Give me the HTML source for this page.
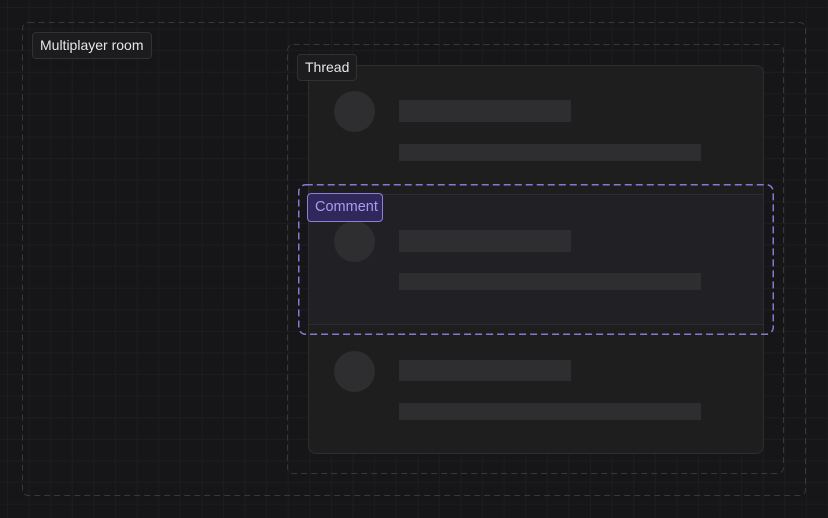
<!DOCTYPE html><html><head><style>
body{margin:0;width:828px;height:518px;overflow:hidden;background-color:#161618;background-image:linear-gradient(#1d1d20 1px,transparent 1px),linear-gradient(90deg,#1d1d20 1px,transparent 1px);background-size:21.6px 21.6px;background-position:7px 7px;font-family:"Liberation Sans",sans-serif;position:relative}
div{position:absolute;box-sizing:border-box}
svg{position:absolute;left:0;top:0}
.lbl{background:#1c1c1e;border:1px solid #313134;border-radius:4px;color:#e6e6e6;font-size:14px;line-height:25px;padding:0 7px}
.av{width:41px;height:41px;border-radius:50%;background:#2e2e31}
.b{background:#2e2e31}
</style></head><body>
<svg width="828" height="518" style="z-index:0">
<rect x="22.5" y="22.5" width="783" height="473" rx="6" fill="none" stroke="#38383b" stroke-dasharray="6 4"/>
<rect x="287.5" y="44.5" width="496" height="429" rx="6" fill="none" stroke="#38383b" stroke-dasharray="6 4"/>
</svg>
<div class="lbl" style="left:32px;top:32px;width:120px;height:27px">Multiplayer room</div>
<div style="left:308px;top:65px;width:456px;height:389px;background:#1e1e1f;border:1px solid #2e2e30;border-radius:8px"></div>
<div style="left:309px;top:194px;width:454px;height:131px;background:#212125;border-top:1px solid #2e2e32;border-bottom:1px solid #2e2e32"></div>
<div class="lbl" style="left:297px;top:54px;width:60px;height:27px">Thread</div>
<div class="av" style="left:334px;top:91px"></div>
<div class="b" style="left:399px;top:100px;width:172px;height:22px"></div>
<div class="b" style="left:399px;top:144px;width:302px;height:17px"></div>
<div class="av" style="left:334px;top:221px"></div>
<div class="b" style="left:399px;top:230px;width:172px;height:22px"></div>
<div class="b" style="left:399px;top:273px;width:302px;height:17px"></div>
<div class="av" style="left:334px;top:351px"></div>
<div class="b" style="left:399px;top:360px;width:172px;height:21px"></div>
<div class="b" style="left:399px;top:403px;width:302px;height:17px"></div>
<svg width="828" height="518">
<rect x="298.75" y="184.75" width="474.5" height="149.5" rx="7" fill="none" stroke="#8a76d0" stroke-width="1.5" stroke-dasharray="7 4"/>
</svg>
<div class="lbl" style="left:307px;top:193px;width:76px;height:29px;background:#30275a;border-color:#8d7fd9;color:#ab9cf2;line-height:27px;font-size:14.5px">Comment</div>
</body></html>
